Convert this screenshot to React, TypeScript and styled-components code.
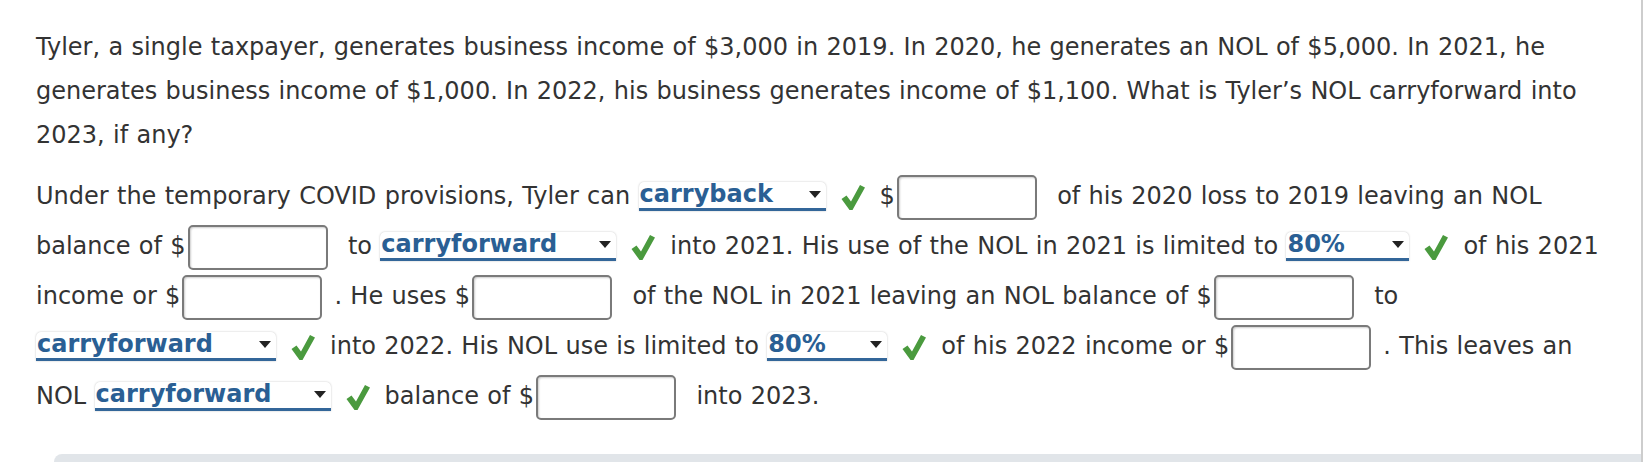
import React from 'react'
import styled, { createGlobalStyle } from 'styled-components'

const GlobalStyle = createGlobalStyle`
  html, body {
    margin: 0;
    padding: 0;
    background: #fff;
  }
  body {
    font-family: 'DejaVu Sans', Verdana, sans-serif;
    color: #333;
  }
`

const Page = styled.div`
  box-sizing: border-box;
  width: 1643px;
  height: 462px;
  overflow: hidden;
  border-right: 2px solid #cdcdcd;
`

const Question = styled.div`
  padding: 25px 0 0 36px;
  font-size: 24px;
  word-spacing: 0.7px;
`

const Prompt = styled.p`
  margin: 0;
  line-height: 44px;
  white-space: nowrap;
`

const Answer = styled.p`
  margin: 14px 0 0;
  line-height: 50px;
  white-space: nowrap;
`

const Select = styled.span<{ $width: number }>`
  position: relative;
  display: inline-block;
  box-sizing: border-box;
  width: ${(p) => p.$width}px;
  height: 29px;
  line-height: 25px;
  padding-left: 1px;
  vertical-align: middle;
  margin-top: -2px;
  background: #fff;
  border-radius: 5px 5px 0 0;
  border-bottom: 3px solid #336699;
  box-shadow: 0 0 2px rgba(0, 0, 0, 0.25);
  color: #2a5f94;
  font-weight: bold;
  word-spacing: normal;
  text-align: left;
  &::after {
    content: '';
    position: absolute;
    right: 5px;
    top: 9px;
    border-left: 6px solid transparent;
    border-right: 6px solid transparent;
    border-top: 7px solid #222;
  }
`

const Input = styled.span`
  display: inline-block;
  box-sizing: border-box;
  width: 140px;
  height: 45px;
  margin: 0 12px 0 2px;
  vertical-align: middle;
  background: #fff;
  border: 2px solid #7a7a7a;
  border-radius: 5px;
  box-shadow: inset 1px 1px 2px rgba(0, 0, 0, 0.2);
`

const CheckIcon = styled.svg`
  display: inline-block;
  width: 24px;
  height: 27px;
  margin: 0 15px;
  vertical-align: middle;
`

const Footer = styled.div`
  height: 60px;
  margin: 33px 0 0 54px;
  background: #e1e5e9;
  border-radius: 8px 0 0 0;
`

const Check = () => (
  <CheckIcon viewBox="0 0 24 27">
    <path
      d="M0.5 15 L5.5 11.5 L10 17.5 L19 1 L24 3.5 L11.5 26 L8.5 26 Z"
      fill="#4a9a3e"
    />
  </CheckIcon>
)

const App: React.FC = () => (
  <>
    <GlobalStyle />
    <Page>
      <Question>
        <Prompt>
          Tyler, a single taxpayer, generates business income of $3,000 in
          2019. In 2020, he generates an NOL of $5,000. In 2021, he
          <br />
          generates business income of $1,000. In 2022, his business generates
          income of $1,100. What is Tyler’s NOL carryforward into
          <br />
          2023, if any?
        </Prompt>
        <Answer>
          Under the temporary COVID provisions, Tyler can{' '}
          <Select $width={187}>carryback</Select>
          <Check />$<Input /> of his 2020 loss to 2019 leaving an NOL
          <br />
          balance of $<Input /> to{' '}
          <Select $width={236}>carryforward</Select>
          <Check />
          into 2021. His use of the NOL in 2021 is limited to{' '}
          <Select $width={123}>80%</Select>
          <Check />
          of his 2021
          <br />
          income or $<Input />. He uses $<Input /> of the NOL in 2021 leaving
          an NOL balance of $<Input /> to
          <br />
          <Select $width={240}>carryforward</Select>
          <Check />
          into 2022. His NOL use is limited to{' '}
          <Select $width={120}>80%</Select>
          <Check />
          of his 2022 income or $<Input />. This leaves an
          <br />
          NOL <Select $width={236}>carryforward</Select>
          <Check />
          balance of $<Input /> into 2023.
        </Answer>
      </Question>
      <Footer />
    </Page>
  </>
)

export default App
